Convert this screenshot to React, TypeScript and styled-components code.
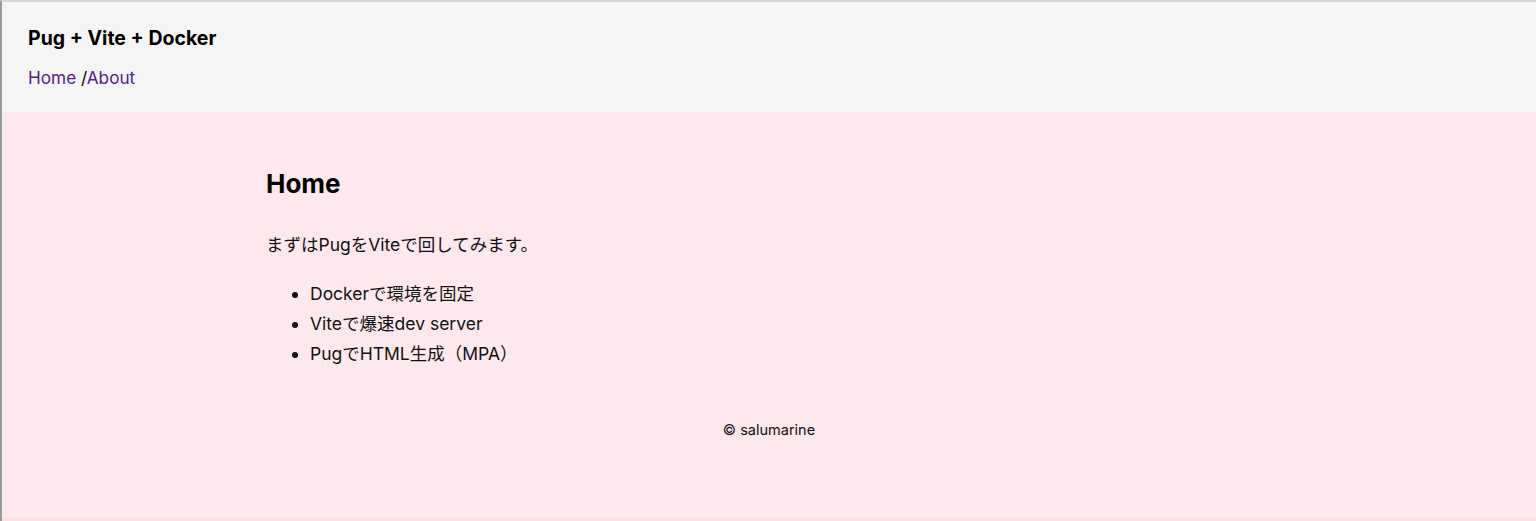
import React from 'react';
import styled, { createGlobalStyle } from 'styled-components';

const GlobalStyle = createGlobalStyle`
  html, body {
    margin: 0;
    padding: 0;
    background: #fde8ee;
  }
  body {
    font-family: Inter, 'Noto Sans CJK JP', sans-serif;
    color: #111;
  }
`;

const Page = styled.div`
  min-height: 521px;
  display: flex;
  flex-direction: column;
  border-top: 2px solid #d6d6d6;
  border-left: 2px solid #9a9a9a;
  box-sizing: border-box;
`;

const Header = styled.header`
  background: #f5f5f5;
  padding: 24px 26px 22px;
  display: flex;
  flex-direction: column;
  gap: 16px;
`;

const SiteTitle = styled.div`
  font-size: 19.5px;
  font-weight: 700;
  line-height: 24px;
  color: #000;
`;

const Nav = styled.nav`
  font-size: 17.2px;
  line-height: 24px;
  color: #000;
`;

const NavLink = styled.a`
  color: #551a8b;
  text-decoration: none;
`;

const Main = styled.main`
  flex: 1;
  background: #fde8ee;
  padding: 56px 0 75px;
  border-bottom: 3px solid #fbe0e3;
`;

const Container = styled.div`
  max-width: 1006px;
  margin: 0 auto;
`;

const Heading = styled.h1`
  font-size: 26px;
  font-weight: 700;
  line-height: 32px;
  margin: 0 0 33px;
  color: #000;
`;

const Lead = styled.p`
  font-size: 17.5px;
  line-height: 24px;
  margin: 0 0 22px;
`;

const List = styled.ul`
  margin: 0;
  padding-left: 44px;
`;

const Item = styled.li`
  font-size: 17.5px;
  line-height: 30px;
`;

const Footer = styled.footer`
  margin-top: 49px;
  text-align: center;
  font-size: 14.5px;
  line-height: 24px;
`;

export default function App() {
  const items = ['Dockerで環境を固定', 'Viteで爆速dev server', 'PugでHTML生成（MPA）'];
  return (
    <>
      <GlobalStyle />
      <Page>
        <Header>
          <SiteTitle>Pug + Vite + Docker</SiteTitle>
          <Nav>
            <NavLink href="#">Home</NavLink> /<NavLink href="#">About</NavLink>
          </Nav>
        </Header>
        <Main>
          <Container>
            <Heading>Home</Heading>
            <Lead>まずはPugをViteで回してみます。</Lead>
            <List>
              {items.map((t) => (
                <Item key={t}>{t}</Item>
              ))}
            </List>
            <Footer>© salumarine</Footer>
          </Container>
        </Main>
      </Page>
    </>
  );
}
